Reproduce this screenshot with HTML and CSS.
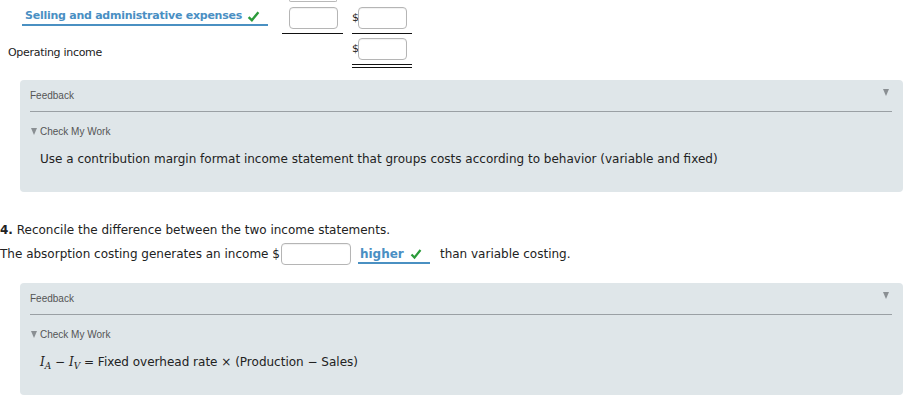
FILE: index.html
```html
<!DOCTYPE html>
<html>
<head>
<meta charset="utf-8">
<link rel="stylesheet" href="styles.css">
</head>
<body>
<div class="page">
  <div class="stub"></div>
  <div class="stmt">
    <div class="row row1">
      <div class="label">
        <span class="answer">Selling and administrative expenses <svg class="check" viewBox="0 0 12 12" width="12" height="12"><path d="M1.5 6.5 L4.5 9.5 L10.5 2" fill="none" stroke="#2b9b3a" stroke-width="2.2"/></svg></span>
      </div>
      <div class="cell c1 single"><span class="box"></span></div>
      <div class="cell c2 single"><span class="dollar">$</span><span class="box"></span></div>
    </div>
    <div class="row row2">
      <div class="label plain">Operating income</div>
      <div class="cell c1"></div>
      <div class="cell c2 double"><span class="dollar">$</span><span class="box"></span></div>
    </div>
  </div>

  <div class="feedback fb1">
    <div class="fb-head"><span>Feedback</span><span class="tri"></span></div>
    <div class="cmw"><span class="tri-s"></span>Check My Work</div>
    <div class="fb-text">Use a contribution margin format income statement that groups costs according to behavior (variable and fixed)</div>
  </div>

  <div class="q4">
    <p class="q"><b>4.</b> Reconcile the difference between the two income statements.</p>
    <div class="line">The absorption costing generates an income $<span class="box inline"></span><span class="sel">higher <svg class="check" viewBox="0 0 12 12" width="12" height="12"><path d="M1.5 6.5 L4.5 9.5 L10.5 2" fill="none" stroke="#2b9b3a" stroke-width="2.2"/></svg></span><span class="tail">than variable costing.</span></div>
  </div>

  <div class="feedback fb2">
    <div class="fb-head"><span>Feedback</span><span class="tri"></span></div>
    <div class="cmw"><span class="tri-s"></span>Check My Work</div>
    <div class="fb-text"><i class="v">I</i><sub class="v">A</sub> − <i class="v">I</i><sub class="v">V</sub> = Fixed overhead rate × (Production − Sales)</div>
  </div>
</div>
</body>
</html>
```
FILE: styles.css
```css
html, body { margin: 0; padding: 0; background: #fff; }
body { font-family: "DejaVu Sans", Verdana, sans-serif; font-size: 12px; color: #222; }
.page { width: 906px; height: 406px; overflow: hidden; }

.stub { width: 46px; height: 1px; margin-left: 289px; border: 1px solid #b8b8b8; border-top: none; border-radius: 0 0 4px 4px; }

.stmt { display: flex; flex-direction: column; }
.row { display: grid; grid-template-columns: 282px 61px 9px 60px; }
.row .c1 { grid-column: 2; }
.row .c2 { grid-column: 4; }
.row1 { height: 32px; }
.label { display: flex; align-items: center; white-space: nowrap; }
.row1 .label { padding-left: 22px; align-items: flex-start; padding-top: 4px; }
.answer { display: inline-flex; align-items: center; gap: 5px; width: 246px; box-sizing: border-box; padding-left: 3px; border-bottom: 2px solid #4a90c2; color: #4a8fc3; font-weight: bold; font-size: 11px; letter-spacing: -0.25px; height: 20px; }
.answer .check { width: 13px; height: 13px; margin-top: 2px; }
.check { display: inline-block; flex: none; }
.plain { padding-left: 8px; font-size: 11px; letter-spacing: -0.3px; padding-top: 2px; }

.cell { display: flex; align-items: flex-start; box-sizing: border-box; }
.box { display: inline-block; box-sizing: border-box; width: 49px; height: 22px; border: 1px solid #b5b5b5; border-radius: 4px; background: #fff; box-shadow: inset 0 1px 1px rgba(0,0,0,0.06); }
.row1 .cell { padding-top: 5px; }
.c1.single { padding-left: 7px; border-bottom: 1px solid #111; }
.c2.single { border-bottom: 1px solid #111; }
.dollar { width: 6px; font-size: 11px; line-height: 22px; }
.row2 { height: 34px; }
.row2 .cell.c2 { padding-top: 4px; border-bottom: 4px double #111; height: 34px; }

.feedback { margin-left: 20px; width: 883px; height: 112px; box-sizing: border-box; background: #dfe6e9; border-radius: 4px; padding: 0 11px 0 10px; }
.fb1 { margin-top: 12px; }
.fb-head { display: flex; justify-content: space-between; align-items: flex-start; height: 32px; border-bottom: 1px solid #9aa0a4; font-family: "Liberation Sans", Arial, sans-serif; font-size: 10px; color: #555; padding-top: 10px; box-sizing: border-box; }
.tri { width: 0; height: 0; border-left: 3px solid transparent; border-right: 3px solid transparent; border-top: 7px solid #8a8f93; margin-right: 3px; margin-top: -1px; }
.cmw { font-family: "Liberation Sans", Arial, sans-serif; font-size: 10px; color: #555; margin-top: 14px; display: flex; align-items: center; }
.tri-s { width: 0; height: 0; border-left: 3px solid transparent; border-right: 3px solid transparent; border-top: 7px solid #8a8f93; margin-right: 3px; margin-left: 1px; margin-top: -1px; }
.fb-text { padding-left: 10px; margin-top: 15px; font-size: 12px; color: #222; }
.v { font-family: "DejaVu Serif", serif; font-style: italic; }
sub.v { font-size: 9px; vertical-align: -3px; line-height: 0; }

.q4 { margin-top: 31px; }
.q { margin: 0; font-size: 12px; }
.line { display: flex; align-items: center; margin-top: 5px; height: 24px; }
.box.inline { width: 70px; margin-left: 1px; }
.sel { display: inline-flex; align-items: center; gap: 6px; margin-left: 7px; padding: 0 2px 1px 2px; width: 72px; box-sizing: border-box; border-bottom: 2px solid #4a90c2; color: #4a8fc3; font-weight: bold; margin-top: 2px; }
.tail { margin-left: 10px; }
.fb2 { margin-top: 17px; }
```
